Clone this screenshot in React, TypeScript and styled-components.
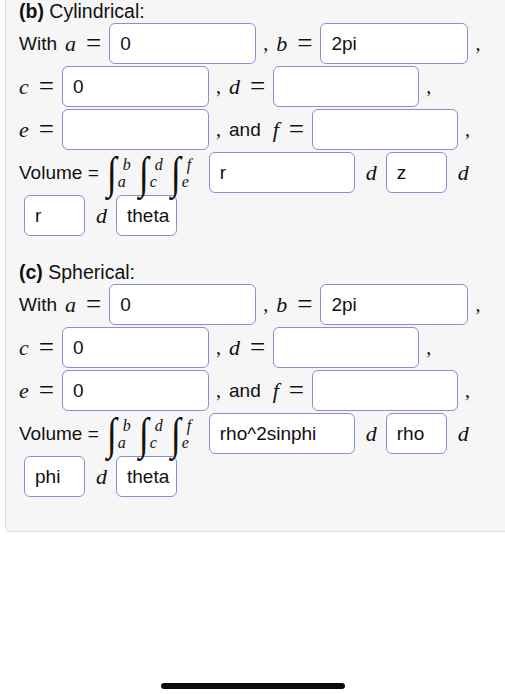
import React from 'react'
import styled, { createGlobalStyle } from 'styled-components'

const GlobalStyle = createGlobalStyle`
  html, body {
    margin: 0;
    padding: 0;
    background: #ffffff;
  }
  body {
    font-family: "Liberation Sans", Arial, sans-serif;
    color: #111;
  }
`

const Page = styled.div`
  width: 505px;
  height: 694px;
  display: flex;
  flex-direction: column;
  overflow: hidden;
`

const Panel = styled.div`
  margin-left: 5px;
  width: 520px;
  background: #f6f6f6;
  border-left: 1px solid #dedede;
  border-bottom: 1px solid #dedede;
  border-bottom-left-radius: 5px;
  padding: 0 0 33px 13px;
`

const Section = styled.section<{ $first?: boolean }>`
  margin-top: ${(p) => (p.$first ? 0 : 24)}px;
`

const Heading = styled.div`
  font-size: 19.5px;
  line-height: 22px;
  b {
    font-weight: 700;
  }
`

const Row = styled.div<{ $indent?: number }>`
  display: flex;
  align-items: center;
  height: 43px;
  padding-left: ${(p) => p.$indent || 0}px;
  white-space: nowrap;
`

const Label = styled.span<{ $after?: number }>`
  font-size: 19px;
  margin-right: ${(p) => p.$after ?? 8}px;
`

const Var = styled.span`
  font-family: "Liberation Serif", "Times New Roman", serif;
  font-style: italic;
  font-size: 22px;
`

const Eq = styled.span`
  font-family: "Liberation Serif", "Times New Roman", serif;
  font-size: 27px;
  line-height: 1;
  margin: 0 8px 0 10px;
`

const Comma = styled.span`
  font-family: "Liberation Serif", "Times New Roman", serif;
  font-size: 20px;
  margin: 0 8px 0 7px;
`

const Field = styled.input<{ $w: number }>`
  box-sizing: border-box;
  width: ${(p) => p.$w}px;
  height: 41px;
  margin: 0;
  padding: 0 0 0 10px;
  border: 1.5px solid #8d8dcf;
  border-radius: 6px;
  background: #ffffff;
  font-family: "Liberation Sans", Arial, sans-serif;
  font-size: 19px;
  color: #111;
  outline: none;
`

const Diff = styled(Var)`
  margin: 0 9px 0 11px;
`

const IntegralGroup = styled.span`
  display: inline-flex;
  align-items: center;
  margin-right: 6px;
`

const IntegralWrap = styled.span`
  display: inline-flex;
  align-items: center;
  width: 32px;
`

const IntSign = styled.span`
  display: inline-block;
  font-family: "Liberation Serif", "Times New Roman", serif;
  font-style: italic;
  font-size: 36px;
  line-height: 1;
  transform: scaleY(1.25);
`

const Limits = styled.span`
  display: inline-flex;
  flex-direction: column;
  justify-content: space-between;
  height: 32px;
  margin-left: 1px;
  font-family: "Liberation Serif", "Times New Roman", serif;
  font-style: italic;
  font-size: 16px;
  line-height: 15px;
`

const Upper = styled.span`
  margin-left: 5px;
`

const Lower = styled.span`
  margin-top: 2px;
`

const HomeBar = styled.div`
  margin: auto auto 5px;
  width: 184px;
  height: 6px;
  border-radius: 3px;
  background: #0b0b0b;
`

const Integral: React.FC<{ upper: string; lower: string }> = ({ upper, lower }) => (
  <IntegralWrap>
    <IntSign>∫</IntSign>
    <Limits>
      <Upper>{upper}</Upper>
      <Lower>{lower}</Lower>
    </Limits>
  </IntegralWrap>
)

interface SectionProps {
  title: string
  name: string
  values: { a: string; b: string; c: string; d: string; e: string; f: string }
  integrand: string
  diffs: [string, string, string]
  first?: boolean
}

const CoordSection: React.FC<SectionProps> = ({ title, name, values, integrand, diffs, first }) => (
  <Section $first={first}>
    <Heading>
      <b>{title}</b> {name}
    </Heading>
    <Row>
      <Label>With</Label>
      <Var>a</Var>
      <Eq>=</Eq>
      <Field $w={147} readOnly value={values.a} />
      <Comma>,</Comma>
      <Var>b</Var>
      <Eq>=</Eq>
      <Field $w={148} readOnly value={values.b} />
      <Comma>,</Comma>
    </Row>
    <Row>
      <Var>c</Var>
      <Eq>=</Eq>
      <Field $w={147} readOnly value={values.c} />
      <Comma>,</Comma>
      <Var>d</Var>
      <Eq>=</Eq>
      <Field $w={146} readOnly value={values.d} />
      <Comma>,</Comma>
    </Row>
    <Row>
      <Var>e</Var>
      <Eq>=</Eq>
      <Field $w={147} readOnly value={values.e} />
      <Comma>,</Comma>
      <Label $after={12}>and</Label>
      <Var>f</Var>
      <Eq>=</Eq>
      <Field $w={146} readOnly value={values.f} />
      <Comma>,</Comma>
    </Row>
    <Row>
      <Label>Volume =</Label>
      <IntegralGroup>
        <Integral upper="b" lower="a" />
        <Integral upper="d" lower="c" />
        <Integral upper="f" lower="e" />
      </IntegralGroup>
      <Field $w={146} readOnly value={integrand} />
      <Diff>d</Diff>
      <Field $w={61} readOnly value={diffs[0]} />
      <Diff>d</Diff>
    </Row>
    <Row $indent={5}>
      <Field $w={61} readOnly value={diffs[1]} />
      <Diff>d</Diff>
      <Field $w={61} readOnly value={diffs[2]} />
    </Row>
  </Section>
)

export default function App() {
  return (
    <>
      <GlobalStyle />
      <Page>
        <Panel>
          <CoordSection
            first
            title="(b)"
            name="Cylindrical:"
            values={{ a: '0', b: '2pi', c: '0', d: '', e: '', f: '' }}
            integrand="r"
            diffs={['z', 'r', 'theta']}
          />
          <CoordSection
            title="(c)"
            name="Spherical:"
            values={{ a: '0', b: '2pi', c: '0', d: '', e: '0', f: '' }}
            integrand="rho^2sinphi"
            diffs={['rho', 'phi', 'theta']}
          />
        </Panel>
        <HomeBar />
      </Page>
    </>
  )
}
